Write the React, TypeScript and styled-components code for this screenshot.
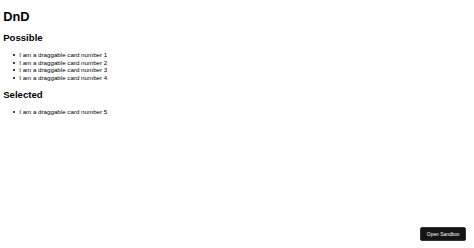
import styled, { createGlobalStyle } from "styled-components";

const GlobalStyle = createGlobalStyle`
  html, body {
    margin: 0;
    padding: 0;
    background: #ffffff;
  }
  body {
    font-family: "Liberation Sans", Arial, sans-serif;
    font-size: 6.2px;
    color: #000;
  }
`;

const possible = [1, 2, 3, 4];
const selected = [5];

export default function App() {
  return (
    <>
      <GlobalStyle />
      <Page>
        <Title>DnD</Title>
        <Section>Possible</Section>
        <CardList>
          {possible.map((n) => (
            <Card key={n}>I am a draggable card number {n}</Card>
          ))}
        </CardList>
        <Section>Selected</Section>
        <CardList>
          {selected.map((n) => (
            <Card key={n}>I am a draggable card number {n}</Card>
          ))}
        </CardList>
      </Page>
      <SandboxButton>Open Sandbox</SandboxButton>
    </>
  );
}

const Page = styled.div`
  padding: 0.1px 3.2px;
`;

const Title = styled.h1`
  font-size: 12.8px;
  font-weight: bold;
  margin: 8.6px 0;
`;

const Section = styled.h2`
  font-size: 9.6px;
  font-weight: bold;
  margin: 8px 0;
`;

const CardList = styled.ul`
  margin: 6.8px 0;
  padding-left: 16px;
  list-style: none;
`;

const Card = styled.li`
  position: relative;
  line-height: 7.4px;

  &::before {
    content: "";
    position: absolute;
    left: -6px;
    top: 3px;
    width: 2px;
    height: 2px;
    border-radius: 50%;
    background: #000;
  }
`;

const SandboxButton = styled.button`
  position: fixed;
  right: 8px;
  bottom: 7px;
  background: #151515;
  color: #fff;
  border: 1px solid #333;
  border-radius: 2px;
  font-family: "Liberation Sans", Arial, sans-serif;
  font-size: 4.9px;
  padding: 3.5px 5.5px;
  cursor: pointer;
`;
